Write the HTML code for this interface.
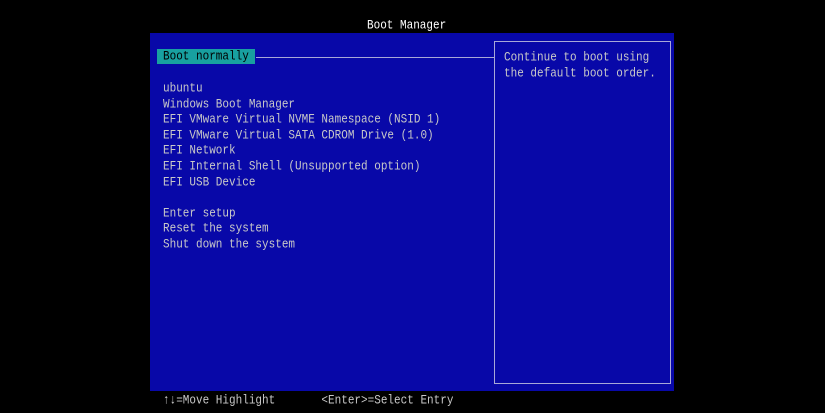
<!DOCTYPE html>
<html><head><style>
html,body{margin:0;padding:0;background:#000;width:825px;height:413px;overflow:hidden;position:relative}
.t{position:absolute;font-family:"Liberation Mono",monospace;font-size:11px;color:#c8c8c8;white-space:pre;line-height:16px;height:16px;transform:scaleY(1.2);transform-origin:0 50%}
#panel{position:absolute;left:150px;top:33px;width:524px;height:358px;background:#0808a8}
#rbox{position:absolute;left:494px;top:41px;width:175px;height:341px;border:1px solid #a8a8d8}
#line{position:absolute;left:256px;top:57px;width:238px;height:1px;background:#a8a8d8}
#hl{position:absolute;left:157px;top:49px;width:98px;height:15px;background:#18a0a0}
</style></head><body>
<div class="t" style="left:367px;top:18px;color:#fff">Boot Manager</div>
<div id="panel"></div>
<div id="rbox"></div>
<div id="line"></div>
<div id="hl"></div>
<div class="t" style="left:163px;top:49px;color:#000">Boot normally</div>
<div class="t" style="left:163px;top:81px">ubuntu</div>
<div class="t" style="left:163px;top:97px">Windows Boot Manager</div>
<div class="t" style="left:163px;top:112px">EFI VMware Virtual NVME Namespace (NSID 1)</div>
<div class="t" style="left:163px;top:128px">EFI VMware Virtual SATA CDROM Drive (1.0)</div>
<div class="t" style="left:163px;top:143px">EFI Network</div>
<div class="t" style="left:163px;top:159px">EFI Internal Shell (Unsupported option)</div>
<div class="t" style="left:163px;top:175px">EFI USB Device</div>
<div class="t" style="left:163px;top:206px">Enter setup</div>
<div class="t" style="left:163px;top:221px">Reset the system</div>
<div class="t" style="left:163px;top:237px">Shut down the system</div>
<div class="t" style="left:504px;top:50px">Continue to boot using</div>
<div class="t" style="left:504px;top:66px">the default boot order.</div>
<div class="t" style="left:163px;top:393px">↑↓=Move Highlight       &lt;Enter&gt;=Select Entry</div>
</body></html>
